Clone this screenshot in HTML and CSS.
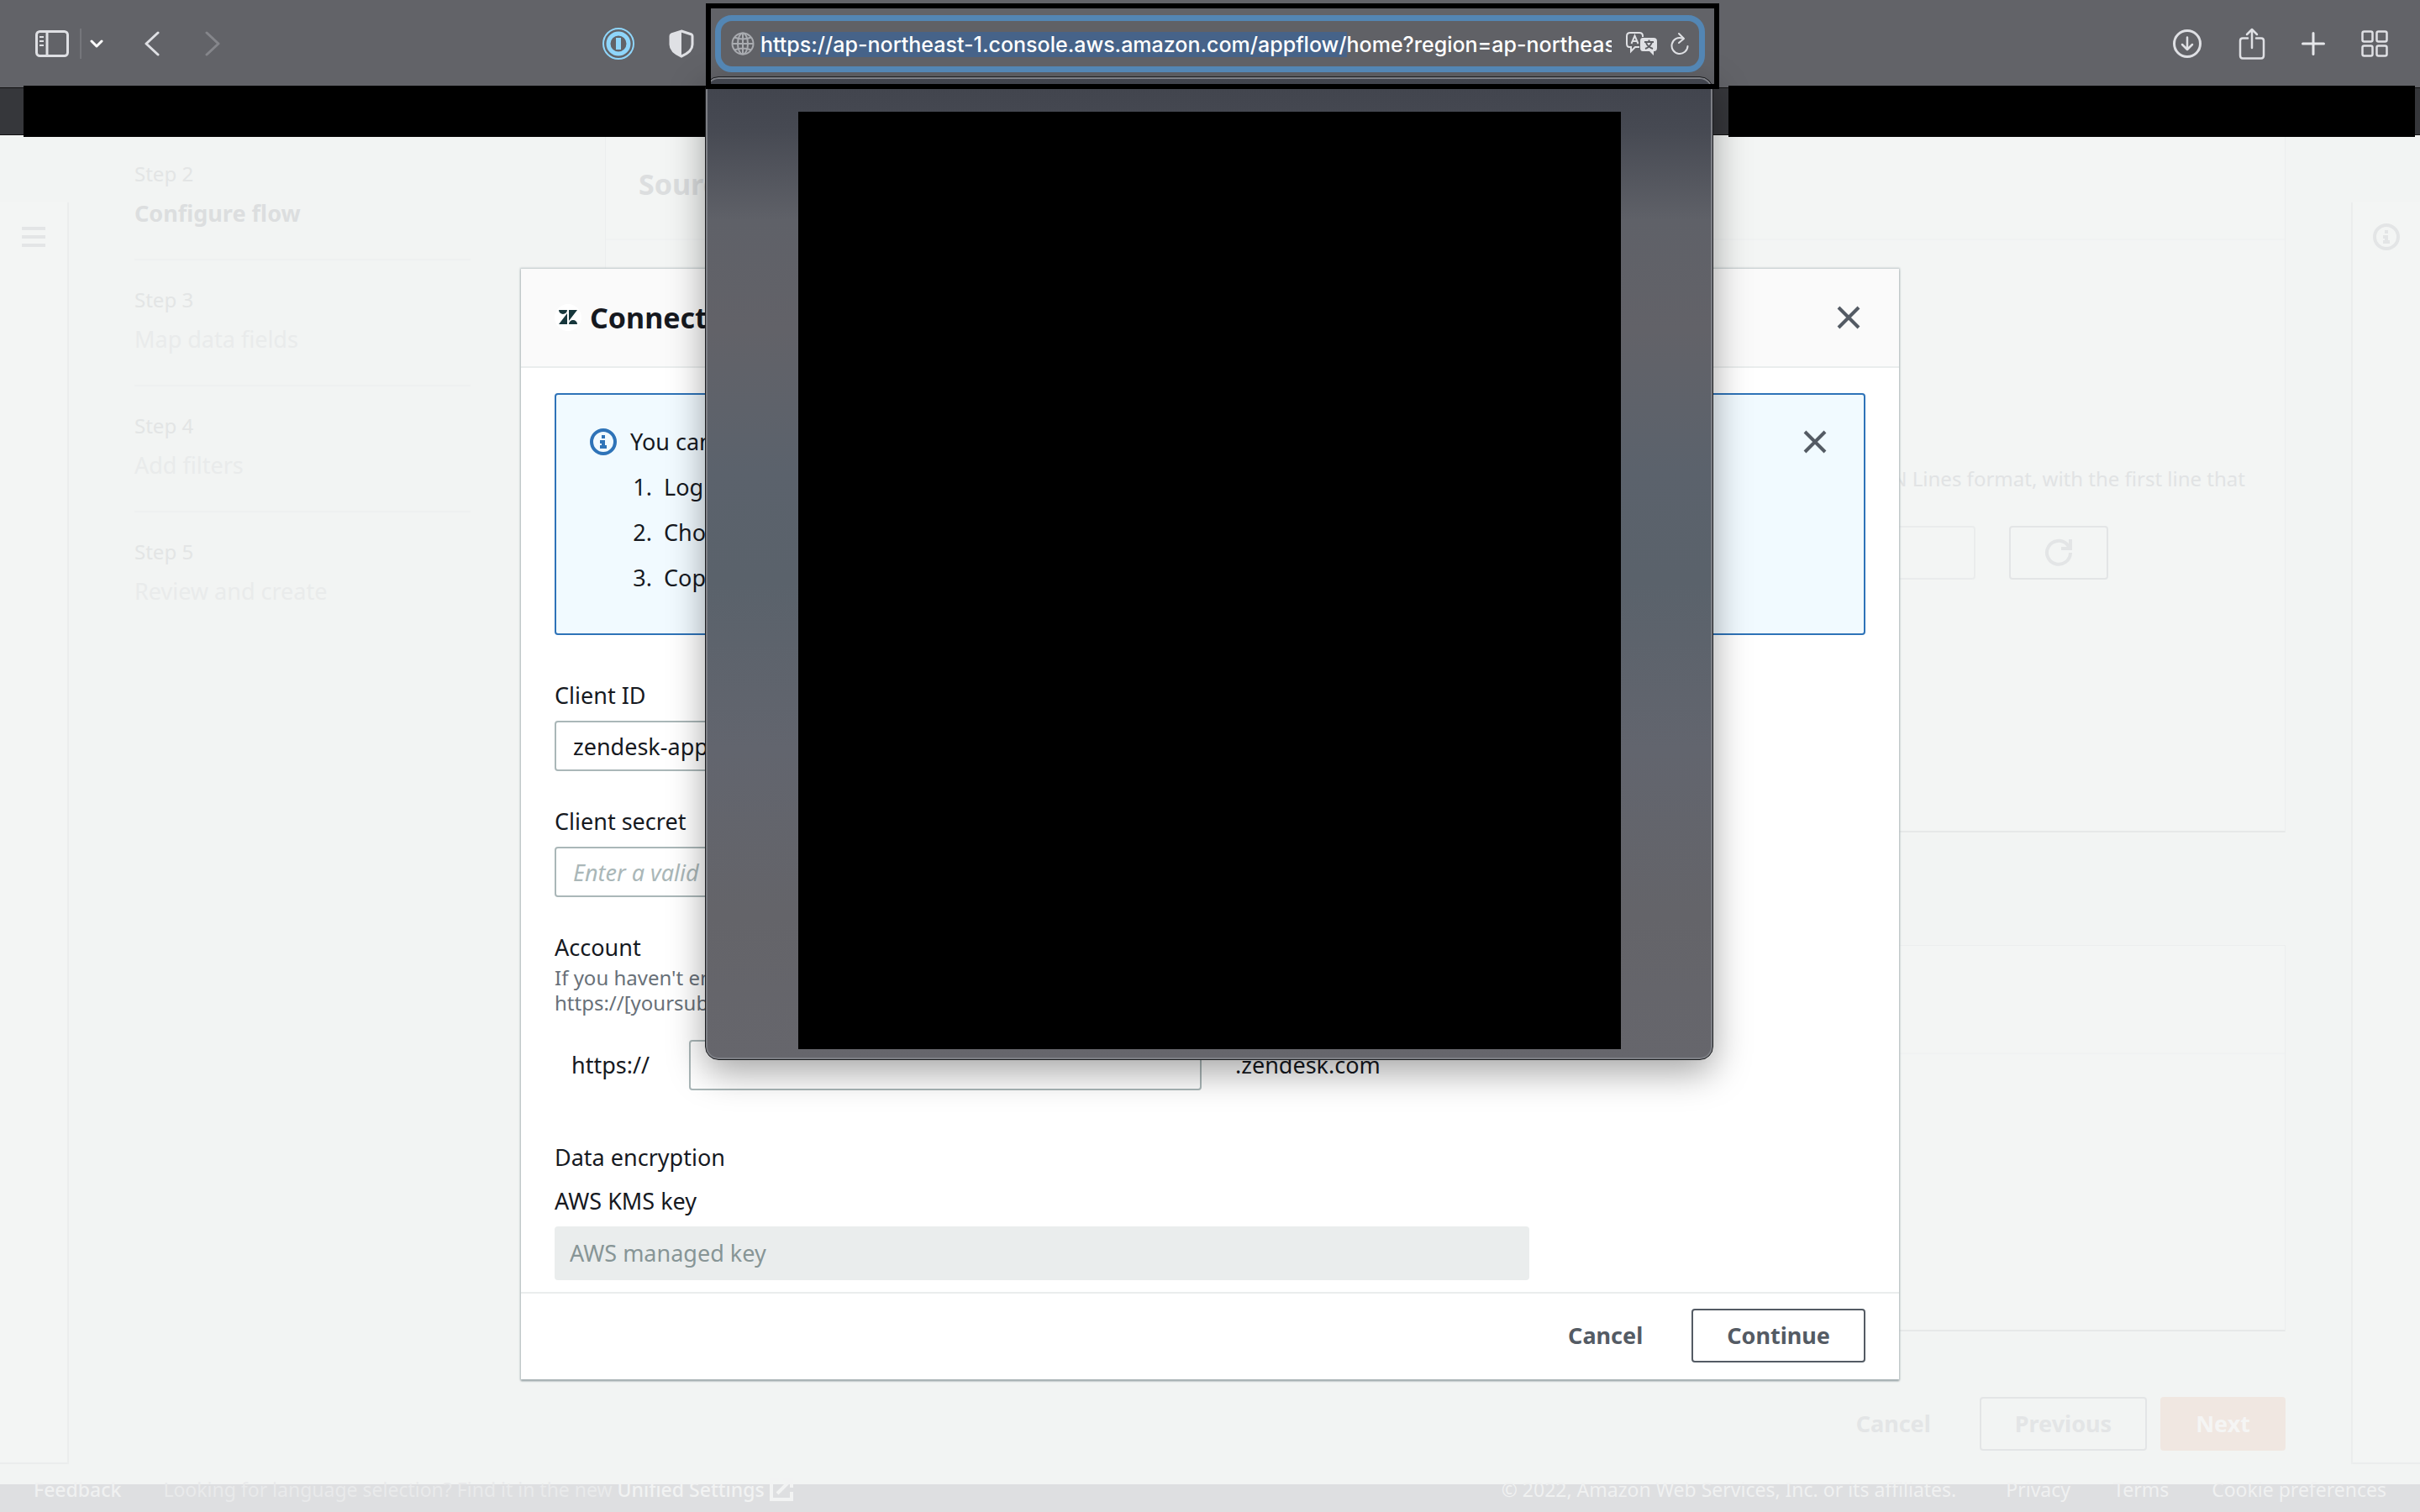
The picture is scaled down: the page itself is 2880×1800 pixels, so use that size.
FILE: index.html
```html
<!DOCTYPE html>
<html lang="en">
<head>
<meta charset="utf-8">
<title>Amazon AppFlow</title>
<link rel="stylesheet" href="styles.css">
</head>
<body>
<header class="browser">
  <div class="toolbar">
    <div class="tools tools-left">
      <div class="tool-group">
        <button class="tool sidebar-tool" aria-label="Sidebar"><svg width="40" height="32" viewBox="0 0 40 32" fill="none" stroke="#dfe0e4" stroke-width="3"><rect x="1.5" y="1.5" width="37" height="29" rx="4"/><path d="M14 2v28"/><path d="M5 8h5M5 13h5M5 18h5" stroke-width="2"/></svg></button>
        <span class="tool-divider"></span>
        <button class="tool menu-tool" aria-label="Tab groups"><svg width="16" height="12" viewBox="0 0 16 12" fill="none" stroke="#fff" stroke-width="3" stroke-linecap="round" stroke-linejoin="round"><path d="M2 3l6 6 6-6"/></svg></button>
        <button class="tool back-tool" aria-label="Back"><svg width="20" height="30" viewBox="0 0 20 30" fill="none" stroke="#dfe0e4" stroke-width="3" stroke-linecap="round" stroke-linejoin="round"><path d="M17 2L3 15l14 13"/></svg></button>
        <button class="tool" aria-label="Forward" disabled><svg width="20" height="30" viewBox="0 0 20 30" fill="none" stroke="#85868b" stroke-width="3" stroke-linecap="round" stroke-linejoin="round"><path d="M3 2l14 13L3 28"/></svg></button>
      </div>
      <div class="tool-group extensions">
        <button class="tool" aria-label="Passwords"><svg width="38" height="38" viewBox="0 0 38 38" fill="none" stroke="#8fd6fb"><circle cx="19" cy="19" r="18" stroke-width="2"/><circle cx="19" cy="19" r="12" stroke-width="5"/><path d="M19 12v14" stroke-width="6"/></svg></button>
        <button class="tool" aria-label="Privacy report"><svg width="30" height="34" viewBox="0 0 30 34"><path d="M15 2l12 4q1 .5 1 2v10c0 7-6 11-13 14C8 29 2 25 2 18V8q0-1.500 1-2z" fill="none" stroke="#dfe0e4" stroke-width="3"/><path d="M15 2L3 6Q2 6.500 2 8v10c0 7 6 11 13 14z" fill="#dfe0e4"/></svg></button>
      </div>
    </div>
    <div class="address">
      <svg width="28" height="28" viewBox="0 0 28 28" fill="none" stroke="#a9abb0" stroke-width="2"><circle cx="14" cy="14" r="12.500"/><ellipse cx="14" cy="14" rx="6" ry="12.500"/><path d="M14 1v26M1.500 14h25M4 6.500q10 4 20 0M4 21.500q10-4 20 0"/></svg>
      <input class="url" id="url" type="text" aria-label="Address" spellcheck="false" value="https://ap-northeast-1.console.aws.amazon.com/appflow/home?region=ap-northeast-1">
      <button class="tool translate-tool" aria-label="Translate"><svg width="38" height="28" viewBox="0 0 38 28"><path d="M20 6V5q0-4-4-4H5Q1 1 1 5v9q0 4 3 4h2v5l5-5h5" fill="none" stroke="#dfe0e4" stroke-width="2"/><path d="M6.500 14L10.500 4.500 14.500 14M8 11h5" fill="none" stroke="#dfe0e4" stroke-width="2"/><path d="M20 7h13q4 0 4 4v8q0 4-3.500 4H33v5l-5-5h-8q-3 0-3-4v-8q0-4 3-4z" fill="#dfe0e4"/><path d="M22 12h11M27.500 9.500V12M31 12q-2 6-8 8M24 13q2 5 8 7" fill="none" stroke="#5c5d62" stroke-width="2"/></svg></button>
      <button class="tool" aria-label="Reload"><svg width="22" height="28" viewBox="0 0 22 28" fill="none" stroke="#dfe0e4" stroke-width="2" stroke-linecap="round" stroke-linejoin="round"><path d="M14 7.500A9.500 9.500 0 1 0 20.500 17"/><path d="M10 2l6 6-6 5"/></svg></button>
    </div>
    <div class="tools tools-right">
      <button class="tool" aria-label="Downloads"><svg width="36" height="36" viewBox="0 0 36 36" fill="none" stroke="#dfe0e4" stroke-width="3" stroke-linecap="round" stroke-linejoin="round"><circle cx="18" cy="18" r="15.500"/><path d="M18 10.500v14M12 19l6 6 6-6" stroke-width="2.500"/></svg></button>
      <button class="tool share-tool" aria-label="Share"><svg width="32" height="38" viewBox="0 0 32 38" fill="none" stroke="#dfe0e4" stroke-width="2.500" stroke-linecap="round" stroke-linejoin="round"><path d="M11 12.500H5q-3 0-3 3V33q0 3.500 3 3.500h22q3 0 3-3.500V15.500q0-3-3-3h-6M16 24V2M10 8l6-6 6 6"/></svg></button>
      <button class="tool" aria-label="New tab"><svg width="28" height="28" viewBox="0 0 28 28" fill="none" stroke="#e6e7ea" stroke-width="3" stroke-linecap="round"><path d="M14 1.500v25M1.500 14h25"/></svg></button>
      <button class="tool" aria-label="Tab overview"><svg width="32" height="32" viewBox="0 0 32 32" fill="none" stroke="#dfe0e4" stroke-width="2.500"><rect x="1.500" y="1.500" width="12" height="12" rx="2"/><rect x="18.500" y="1.500" width="12" height="12" rx="2"/><rect x="1.500" y="18.500" width="12" height="12" rx="2"/><rect x="18.500" y="18.500" width="12" height="12" rx="2"/></svg></button>
    </div>
  </div>
  <div class="tabs"><div class="tab-block"></div><div class="tab-block"></div></div>
  <div class="suggestions"><div class="suggestions-block"></div></div>
  <div class="address-frame"></div>
</header>

<div class="app">
  <aside class="rail"><button class="tool" aria-label="Open navigation"><svg width="28" height="24" viewBox="0 0 28 24" fill="#e3e5e6"><path d="M0 0h28v4H0zM0 10h28v4H0zM0 20h28v4H0z"/></svg></button></aside>
  <main class="wizard">
    <nav class="steps">
      <div class="step current"><small>Step 2</small><span>Configure flow</span></div>
      <div class="step"><small>Step 3</small><span>Map data fields</span></div>
      <div class="step"><small>Step 4</small><span>Add filters</span></div>
      <div class="step"><small>Step 5</small><span>Review and create</span></div>
    </nav>
    <div class="content">
      <section class="card source">
        <h2 class="card-head">Source</h2>
        <div class="source-body">
          <p class="format-note">JSON Lines format, with the first line that</p>
          <div class="picker"><div class="picker-box"></div><button class="button faded refresh" aria-label="Refresh"><svg width="34" height="34" viewBox="0 0 34 34" fill="none" stroke="#e3e5e6" stroke-width="4"><path d="M31 17A14 14 0 1 1 27 7l3 4"/><path d="M31 1v11H20"/></svg></button></div>
        </div>
      </section>
      <section class="card destination"><div class="destination-head"></div></section>
      <div class="wizard-actions">
        <button class="button faded plain">Cancel</button>
        <button class="button faded">Previous</button>
        <button class="button faded next">Next</button>
      </div>
    </div>
  </main>
  <aside class="rail rail-right"><button class="tool" aria-label="Open help"><svg width="32" height="32" viewBox="0 0 32 32" fill="#e3e5e6"><circle cx="16" cy="16" r="14" fill="none" stroke="#e3e5e6" stroke-width="4"/><path d="M14 8h4v4h-4zM12 14h6v6h2v4h-8v-4h2v-2h-2z"/></svg></button></aside>
</div>

<footer class="footer">
  <a class="feedback" href="#">Feedback</a>
  <span class="language">Looking for language selection? Find it in the new <a href="#">Unified Settings</a></span>
  <svg width="28" height="28" viewBox="0 0 28 28" fill="none" stroke="#f2f3f3" stroke-width="4"><path d="M11 2H2v24h24v-9M9 19L24 4M16 2h10v10"/></svg>
  <span class="copyright">© 2022, Amazon Web Services, Inc. or its affiliates.</span>
  <a href="#">Privacy</a>
  <a href="#">Terms</a>
  <a href="#">Cookie preferences</a>
</footer>

<div class="layer">
  <form class="modal" role="dialog" aria-labelledby="modal-title">
    <header class="modal-head">
      <svg class="logo" width="32" height="32" viewBox="0 0 32 32"><circle cx="16" cy="16" r="16" fill="#fff"/><path d="M5 7h10a5 5 0 0 1-10 0zM15 11v13H5zM17 7h10L17 20zM17 24a5 5 0 0 1 10 0z" fill="#17373c"/></svg>
      <h1 id="modal-title">Connect</h1>
      <button class="tool close" type="button" aria-label="Close"><svg width="28" height="28" viewBox="0 0 28 28" stroke="#545b64" stroke-width="4"><path d="M2 2l24 24M26 2L2 26"/></svg></button>
    </header>
    <div class="modal-body">
      <section class="alert">
        <svg class="alert-icon" width="32" height="32" viewBox="0 0 32 32" fill="#2e73b8"><circle cx="16" cy="16" r="14" fill="none" stroke="#2e73b8" stroke-width="4"/><path d="M14 8h4v4h-4zM12 14h6v6h2v4h-8v-4h2v-2h-2z"/></svg>
        <div class="alert-text">
          <p>You can</p>
          <ol><li>Log</li><li>Choose</li><li>Copy</li></ol>
        </div>
        <button class="tool" type="button" aria-label="Dismiss"><svg width="28" height="28" viewBox="0 0 28 28" stroke="#545b64" stroke-width="4"><path d="M2 2l24 24M26 2L2 26"/></svg></button>
      </section>
      <div class="field">
        <label for="client-id">Client ID</label>
        <input class="text-input" id="client-id" type="text" value="zendesk-appflow">
      </div>
      <div class="field">
        <label for="client-secret">Client secret</label>
        <input class="text-input" id="client-secret" type="text" placeholder="Enter a valid client secret">
      </div>
      <div class="field">
        <label for="account">Account</label>
        <p class="hint">If you haven't entered<br>https://[yoursubdomain]</p>
        <div class="domain"><span class="scheme">https://</span><input class="text-input" id="account" type="text"><span>.zendesk.com</span></div>
      </div>
      <div class="encryption">
        <h2>Data encryption</h2>
        <label for="kms">AWS KMS key</label>
        <select id="kms" class="kms" disabled><option>AWS managed key</option></select>
      </div>
    </div>
    <footer class="modal-foot">
      <button class="button plain" type="button">Cancel</button>
      <button class="button" type="button">Continue</button>
    </footer>
  </form>
</div>
<script src="script.js"></script>
</body>
</html>
```
FILE: styles.css
```css
* { box-sizing: border-box; }
html { height: 100%; }
body {
  position: relative;
  display: flex;
  flex-direction: column;
  min-height: 100%;
  margin: 0;
  background: #f2f4f3;
  color: #16191f;
  font: 27px/36px "Noto Sans", "Open Sans", sans-serif;
  overflow-x: hidden;
}
h1, h2, p, ol { margin: 0; padding: 0; font-weight: inherit; font-size: inherit; }
svg { display: block; flex: none; }
button, input, select { font: inherit; color: inherit; margin: 0; }
a { color: inherit; text-decoration: none; }
.tool { display: block; flex: none; padding: 0; border: 0; background: none; }

/* Browser chrome */
.browser { position: relative; z-index: 3; }
.toolbar {
  display: grid;
  grid-template-columns: 1fr minmax(0, 1178px) 1fr;
  align-items: center;
  height: 104px;
  background: #626368;
}
.tools { display: flex; align-items: center; }
.tools-left { justify-content: space-between; padding: 0 25px 0 42px; }
.tools-right { justify-content: flex-end; gap: 43px; padding-right: 38px; }
.tool-group { display: flex; align-items: center; }
.extensions { gap: 41px; }
.tool-divider { width: 2px; height: 36px; margin: 0 10px 0 13px; background: #75767b; }
.menu-tool { margin-right: 48px; }
.back-tool { margin-right: 52px; }
.address {
  position: relative;
  z-index: 3;
  display: flex;
  align-items: center;
  height: 68px;
  padding: 0 12px;
  border: 7px solid #5386b4;
  border-radius: 20px;
  background: #606166;
}
.url {
  flex: 1;
  min-width: 0;
  height: 34px;
  margin: 0 17px 0 7px;
  padding: 2px 0 0;
  border: 0;
  outline: 0;
  background: none;
  color: #fff;
  font: 500 25px/32px Inter, "Liberation Sans", sans-serif;
}
.url::selection { background: #466389; color: #fff; }
.translate-tool { margin-right: 15px; }
.tabs {
  display: flex;
  gap: 1212px;
  height: 57px;
  padding: 0 6px 0 28px;
  background: #36373b;
  border-top: 1px solid #111;
  border-bottom: 1px solid #111;
}
.tab-block { flex: 1; margin: -3px 0; background: #000; }
.address-frame {
  position: absolute;
  z-index: 2;
  top: 4px;
  left: 50%;
  width: 1206px;
  height: 102px;
  margin-left: -600px;
  border: 6px solid #000;
}
.suggestions {
  position: absolute;
  z-index: 1;
  top: 91px;
  left: 50%;
  width: 1200px;
  margin-left: -601px;
  padding: 41px 109px 12px 110px;
  border: 1px solid #1c1d20;
  border-radius: 16px;
  background: linear-gradient(#41444d 0, #464952 60px, #5f6168 170px, #626268 300px, #5b626c 470px, #5a626b 600px, #62656e 800px, #646469 1000px, #66666c);
  box-shadow: inset 0 0 0 2px #7d7f85, 0 14px 44px rgba(0, 0, 0, .36);
}
.suggestions-block { height: 1116px; background: #000; }

/* Wizard page, dimmed behind the dialog */
.app { display: grid; grid-template-columns: 82px 1fr 82px; flex: 1; }
.rail {
  display: flex;
  justify-content: center;
  align-items: flex-start;
  margin: 80px 0 24px;
  padding-top: 29px;
  background: #f3f5f4;
  border-right: 2px solid #ebeded;
  border-bottom: 2px solid #ebeded;
}
.rail-right { padding-top: 25px; border-right: 0; border-left: 2px solid #ebeded; }
.wizard { display: grid; grid-template-columns: 400px 1fr; gap: 160px; padding: 0 78px; }
.steps { padding-top: 31px; color: #e9ebeb; }
.step { display: grid; gap: 14px; height: 118px; margin-bottom: 32px; border-bottom: 2px solid #eef0f0; align-content: start; }
.step:last-child { border: 0; }
.step small { font-size: 24px; line-height: 30px; color: #e3e5e5; }
.current span { font-weight: 700; color: #dcdedf; }
.card { background: #f3f5f4; border: 1px solid #eceeee; border-bottom: 2px solid #e6e8e8; }
.source { border-top: 0; }
.card-head { padding: 36px 39px 43px; border-bottom: 2px solid #f0f2f2; font-size: 34px; line-height: 44px; font-weight: 700; color: #dcdedf; }
.source-body { padding: 266px 47px 299px; }
.format-note { text-align: right; font-size: 24px; color: #e1e3e4; }
.picker { display: flex; justify-content: flex-end; gap: 40px; margin-top: 38px; padding-right: 163px; }
.picker-box { width: 600px; height: 64px; border: 2px solid #eaecec; border-radius: 4px; }
.destination { height: 460px; margin-top: 134px; }
.destination-head { height: 129px; border-bottom: 2px solid #f0f2f2; }
.wizard-actions { display: flex; justify-content: flex-end; gap: 16px; margin: 78px 0 40px; }

.button {
  height: 64px;
  padding: 0 40px;
  border: 2px solid #545b64;
  border-radius: 4px;
  background: none;
  color: #545b64;
  font-weight: 700;
}
.plain { border-color: transparent; }
.faded { border-color: #e3e5e6; color: #e3e5e6; }
.faded.plain { border-color: transparent; }
.next { border-color: #f0e7e1; background: #f0e7e1; color: #f5f5f4; }

.footer {
  display: flex;
  align-items: center;
  height: 34px;
  padding: 0 40px 22px;
  background: #dedfe1;
  color: #f0f1f1;
  font-size: 23px;
  white-space: nowrap;
}
.feedback { margin-right: 50px; font-weight: 500; }
.language { margin-right: 6px; color: #e9eaeb; }
.language a { color: #f2f3f3; font-weight: 500; }
.copyright { margin: 0 8px 0 auto; }
.copyright ~ a { margin-left: 51px; }

/* Dialog */
.layer { position: absolute; z-index: 2; top: 320px; left: 0; right: 0; display: flex; justify-content: center; }
.modal {
  width: 100%;
  max-width: 1640px;
  background: #fff;
  box-shadow: 0 0 2px 1px #bcc5c6, 0 2px 2px #7f8b8f;
}
.modal-head { display: flex; align-items: center; gap: 10px; height: 118px; padding: 0 46px 0 40px; background: #fafafa; border-bottom: 2px solid #eaeded; }
.modal-head h1 { flex: 1; font-size: 34px; line-height: 44px; font-weight: 700; }
.modal-body { padding: 30px 40px 14px; }
.alert { display: flex; align-items: flex-start; margin-bottom: 54px; padding: 29px 44px 39px 40px; border: 2px solid #2e73b8; border-radius: 4px; background: #f1faff; line-height: 54px; }
.alert .alert-icon { margin-top: 11px; }
.alert .tool { margin-top: 13px; }
.alert-text { flex: 1; padding-left: 16px; }
.alert-text ol { padding-left: 40px; }
.alert-text li::marker { content: counter(list-item) ".\00a0\00a0"; }
.field { margin-bottom: 42px; }
.field label, .encryption label { display: block; }
.text-input { width: 1160px; max-width: 100%; height: 60px; padding: 0 20px; border: 2px solid #aab7b8; border-radius: 4px; background: #fff; }
.field > .text-input { display: block; margin-top: 12px; }
.text-input::placeholder { color: #aab7b8; font-style: italic; opacity: 1; }
.hint { margin-top: 3px; font-size: 24px; line-height: 30px; color: #687078; }
.domain { display: flex; align-items: center; margin-top: 29px; padding-left: 20px; gap: 40px; }
.scheme { min-width: 100px; }
.domain .text-input { width: 610px; }
.encryption { margin-top: 62px; }
.encryption h2 { margin-bottom: 16px; }
.kms { display: block; width: 1160px; max-width: 100%; height: 64px; margin-top: 12px; padding: 0 18px; border: 0; border-radius: 4px; background: #eaeded; color: #879596; opacity: 1; appearance: none; }
.modal-foot { display: flex; justify-content: flex-end; gap: 16px; padding: 18px 40px 20px; border-top: 2px solid #eaeded; }
```
FILE: script.js
```js
// The host and path of the address start out selected.
const url = document.getElementById("url");
url.focus();
url.setSelectionRange(0, url.value.indexOf("home?"));
```
